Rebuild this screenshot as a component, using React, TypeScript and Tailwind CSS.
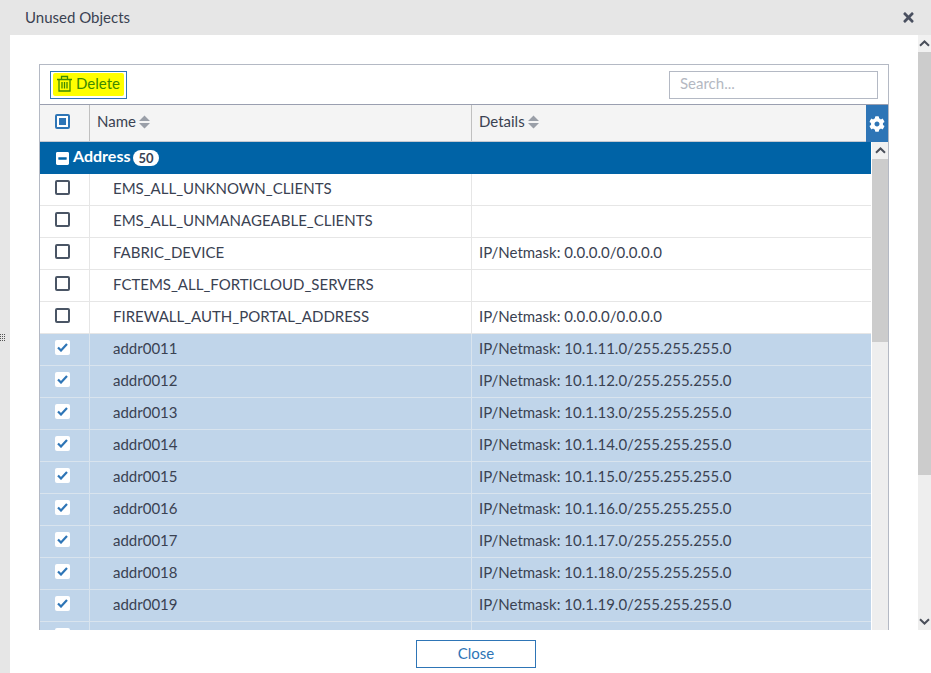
import { FaCog, FaMinusSquare, FaTimes } from "react-icons/fa";

const namedRows = [
  { name: "EMS_ALL_UNKNOWN_CLIENTS", details: "" },
  { name: "EMS_ALL_UNMANAGEABLE_CLIENTS", details: "" },
  { name: "FABRIC_DEVICE", details: "IP/Netmask: 0.0.0.0/0.0.0.0" },
  { name: "FCTEMS_ALL_FORTICLOUD_SERVERS", details: "" },
  { name: "FIREWALL_AUTH_PORTAL_ADDRESS", details: "IP/Netmask: 0.0.0.0/0.0.0.0" },
];

const addrRows = [11, 12, 13, 14, 15, 16, 17, 18, 19].map((n) => ({
  name: `addr00${n}`,
  details: `IP/Netmask: 10.1.${n}.0/255.255.255.0`,
}));

function TrashIcon() {
  return (
    <svg width="15" height="17" viewBox="0 0 15 17" fill="none" stroke="#3d8a00" strokeWidth="1.3">
      <path d="M0 4.5h15M2 4.5v11.5h11v-11.5M4.5 4.5V1.5h6v3M5 7v6.5M7.5 7v6.5M10 7v6.5" />
    </svg>
  );
}

function SortIcon() {
  return (
    <svg width="11" height="14" viewBox="0 0 11 14" fill="#9a9fa8">
      <path d="M5.5 0.5L11 6H0zM0 8h11l-5.5 5.5z" />
    </svg>
  );
}

function Chevron({ down }: { down?: boolean }) {
  return (
    <svg width="11" height="7" viewBox="0 0 11 7" fill="none" stroke="#4a4f5a" strokeWidth="2">
      <path d={down ? "M1 1.2l4.5 4.3L10 1.2" : "M1 5.8l4.5-4.3L10 5.8"} />
    </svg>
  );
}

function Scrollbar({ thumb, width, clipped }: { thumb: string; width: string; clipped?: boolean }) {
  return (
    <div className={`${width} shrink-0 h-full flex flex-col bg-[#eeeeee]`}>
      <div className="h-[17px] flex items-center justify-center bg-[#f1f1f1]">
        <Chevron />
      </div>
      <div className={`${thumb} bg-[#cccccc]`} />
      <div className="flex-1" />
      {!clipped && (
        <div className="h-[18px] flex items-center justify-center">
          <Chevron down />
        </div>
      )}
    </div>
  );
}

function Row({ name, details, checked }: { name: string; details: string; checked?: boolean }) {
  return (
    <div className={`h-[32px] shrink-0 flex border-b ${checked ? "bg-[#c0d5ea] border-[#d9e4ee]" : "bg-white border-[#e6e6e6]"}`}>
      <div className={`w-[50px] shrink-0 pl-[15px] pt-[6px] border-r ${checked ? "border-[#d9e4ee]" : "border-[#e6e6e6]"}`}>
        {checked ? (
          <div className="w-[15px] h-[15px] rounded-[2px] bg-white flex items-center justify-center">
            <svg width="11" height="9" viewBox="0 0 11 9" fill="none" stroke="#2e75b6" strokeWidth="2.2">
              <path d="M1 4.5l3 3 6-6.5" />
            </svg>
          </div>
        ) : (
          <div className="w-[15px] h-[15px] rounded-[2px] border-2 border-[#4a5565] bg-white" />
        )}
      </div>
      <div className={`w-[382px] shrink-0 pl-[23px] leading-[29px] border-r ${checked ? "border-[#d9e4ee]" : "border-[#e6e6e6]"}`}>
        {name}
      </div>
      <div className="flex-1 pl-[7px] leading-[29px]">{details}</div>
    </div>
  );
}

export default function App() {
  return (
    <div className="relative w-[931px] h-[673px] overflow-hidden flex flex-col bg-[#e6e6e6] text-[15px] text-[#3a4252] font-['Lato',sans-serif]">
      {/* Title bar */}
      <div className="h-[35px] shrink-0 flex items-center justify-between pl-[25px] pr-[15px]">
        <span>Unused Objects</span>
        <FaTimes className="text-[#4a5060] text-[15px]" />
      </div>

      {/* Resize grip */}
      <div className="absolute left-0 top-[334px] grid grid-cols-3 gap-[1px]">
        {Array.from({ length: 12 }).map((_, i) => (
          <span key={i} className="w-[1px] h-[1px] bg-[#555555]" />
        ))}
      </div>

      <div className="h-[595px] shrink-0 flex ml-[10px] bg-white">
        <div className="flex-1 overflow-hidden pt-[29px] pl-[29px] pr-[29px]">
          <div className="w-[850px] h-[566px] flex flex-col border-x border-t border-[#b4b9c4]">
            {/* Toolbar */}
            <div className="h-[40px] shrink-0 flex items-center justify-between pl-[10px] pr-[10px] border-b border-[#9a9fb0]">
              <button className="w-[77px] h-[28px] flex items-center pl-[2px] border border-[#2e75b6] bg-white">
                <span className="flex items-center gap-[4px] bg-[#ffff00] w-[71px] h-[23px] pl-[4px] pb-[2px] rounded-[2px] text-[#3d8a00]">
                  <TrashIcon />
                  Delete
                </span>
              </button>
              <div className="w-[209px] h-[28px] border border-[#b4b9c4] pl-[10px] leading-[23px] text-[#b4b8c2]">Search...</div>
            </div>

            {/* Column headers */}
            <div className="h-[37px] shrink-0 flex bg-[#f4f4f4] border-b border-[#c4c8d0]">
              <div className="w-[50px] shrink-0 pl-[15px] pt-[9px] border-r border-[#c0c0c0]">
                <div className="w-[15px] h-[15px] rounded-[2px] border-2 border-[#2e75b6] bg-white p-[2px]">
                  <div className="w-full h-full bg-[#2e75b6]" />
                </div>
              </div>
              <div className="w-[382px] shrink-0 pl-[7px] pb-[3px] flex items-center gap-[3px] border-r border-[#c0c0c0]">
                Name <SortIcon />
              </div>
              <div className="flex-1 pl-[7px] pb-[3px] flex items-center gap-[3px]">
                Details <SortIcon />
              </div>
              <div className="w-[22px] shrink-0 flex items-center justify-center bg-[#2e75b6] -mb-[1px]">
                <FaCog className="text-white text-[16px]" />
              </div>
            </div>

            {/* Table body */}
            <div className="flex-1 min-h-0 flex">
              <div className="flex-1 min-w-0 overflow-hidden">
                <div className="h-[32px] flex items-center pl-[16px] pb-[5px] gap-[4px] bg-[#0063a6] text-white font-bold text-[16px]">
                  <FaMinusSquare className="w-[13px] h-[15px] mt-[5px]" />
                  <span>Address</span>
                  <span className="h-[16px] mt-[4px] -ml-[1px] px-[5px] rounded-full bg-white text-[#3a4252] text-[13px] leading-[16px]">50</span>
                </div>
                {namedRows.map((r) => (
                  <Row key={r.name} {...r} />
                ))}
                {addrRows.map((r) => (
                  <Row key={r.name} {...r} checked />
                ))}
                <Row name="" details="" checked />
              </div>
              <div className="w-[1px] shrink-0" />
              <Scrollbar width="w-[16px]" thumb="h-[183px]" clipped />
            </div>
          </div>
        </div>
        <Scrollbar width="w-[13px]" thumb="h-[423px]" />
      </div>

      {/* Footer */}
      <div className="flex-1 ml-[10px] bg-white pl-[406px] pt-[10px]">
        <button className="w-[120px] h-[28px] pb-[2px] border border-[#2e75b6] text-[#2e75b6] bg-white">Close</button>
      </div>
    </div>
  );
}
